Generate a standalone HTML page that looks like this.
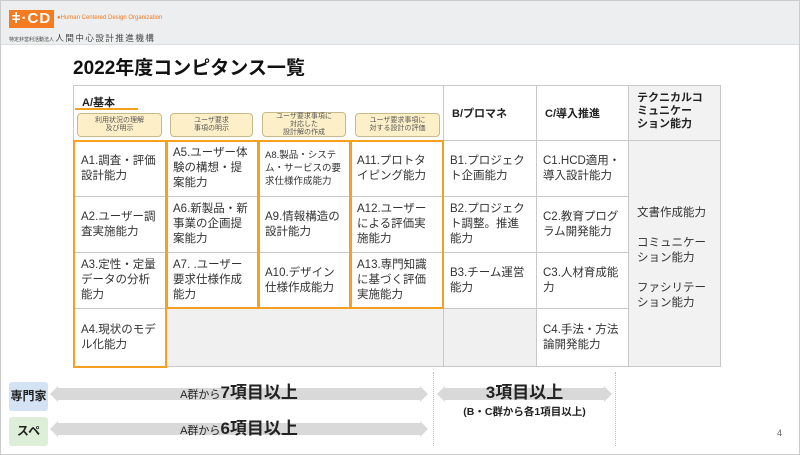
<!DOCTYPE html>
<html><head><meta charset="utf-8"><style>
*{margin:0;padding:0;box-sizing:border-box}
body{width:800px;height:455px;position:relative;overflow:hidden;background:#fff;font-family:"Liberation Sans","Noto Sans CJK JP",sans-serif;color:#222}
.a{position:absolute}
.c{position:absolute;font-size:11.5px;line-height:15px;padding:0 0 0 7px;display:flex;align-items:center;color:#333}
.o{position:absolute;border:2px solid #f5a020}
.t{position:absolute;background:#fdefc8;border:1px solid #c9b98a;border-radius:4px;font-size:7px;line-height:8px;text-align:center;color:#555;display:flex;align-items:center;justify-content:center}
.h{position:absolute;border-top:1px solid #c8c8c8}
.v{position:absolute;border-left:1px solid #c8c8c8}
.bar{position:absolute;height:12px;background:#d9d9d9;z-index:1}
.hl{position:absolute;z-index:1;width:0;height:0;border-top:8px solid transparent;border-bottom:8px solid transparent;border-right:8px solid #d9d9d9}
.hr{position:absolute;z-index:1;width:0;height:0;border-top:8px solid transparent;border-bottom:8px solid transparent;border-left:8px solid #d9d9d9}
.tx{position:absolute;z-index:2;background:transparent;text-align:center}
</style></head><body>
<div class="a" style="left:0;top:0;width:800px;height:45px;background:#eceeef;border-bottom:1px solid #ddd"></div>
<div class="a" style="left:0;top:0;width:800px;height:455px;border:1px solid #ccc"></div>
<div class="a" style="left:9px;top:10px;width:45px;height:18px;background:#f47b20;color:#fff;font-size:15px;font-weight:bold;line-height:18px;text-align:center;letter-spacing:1px">ǂ·CD</div>
<div class="a" style="left:57px;top:15px;font-size:6px;color:#f47b20">●Human Centered Design Organization</div>
<div class="a" style="left:9px;top:32px;font-size:5px;color:#444">特定非営利活動法人 <span style="font-size:8.5px;letter-spacing:1.5px">人間中心設計推進機構</span></div>
<div class="a" style="left:73px;top:53px;font-size:19px;font-weight:bold;color:#111">2022年度コンピタンス一覧</div>

<div class="a" style="left:73px;top:85px;width:648px;height:282px;border:1px solid #c8c8c8"></div>
<div class="a" style="left:166px;top:308px;width:277px;height:58px;background:#f0f0f0"></div>
<div class="a" style="left:443px;top:308px;width:93px;height:58px;background:#f0f0f0"></div>
<div class="a" style="left:628px;top:86px;width:92px;height:280px;background:#f2f2f2"></div>
<div class="v" style="left:443px;top:85px;height:282px"></div>
<div class="v" style="left:536px;top:85px;height:282px"></div>
<div class="v" style="left:628px;top:85px;height:282px"></div>
<div class="v" style="left:166px;top:140px;height:168px"></div>
<div class="v" style="left:258px;top:140px;height:168px"></div>
<div class="v" style="left:350px;top:140px;height:168px"></div>
<div class="h" style="left:73px;top:140px;width:648px"></div>
<div class="h" style="left:73px;top:196px;width:555px"></div>
<div class="h" style="left:73px;top:252px;width:555px"></div>
<div class="h" style="left:73px;top:308px;width:555px"></div>

<div class="a" style="left:82px;top:94px;font-size:11px;font-weight:bold">A/基本</div>
<div class="a" style="left:75px;top:108px;width:63px;height:2px;background:#f5a020"></div>
<div class="t" style="left:77px;top:113px;width:85px;height:24px">利用状況の理解<br>及び明示</div>
<div class="t" style="left:170px;top:113px;width:83px;height:24px">ユーザ要求<br>事項の明示</div>
<div class="t" style="left:262px;top:112px;width:84px;height:25px">ユーザ要求事項に<br>対応した<br>設計解の作成</div>
<div class="t" style="left:355px;top:113px;width:85px;height:24px">ユーザ要求事項に<br>対する設計の評価</div>
<div class="a" style="left:452px;top:105px;font-size:11px;font-weight:bold">B/プロマネ</div>
<div class="a" style="left:545px;top:105px;font-size:11px;font-weight:bold">C/導入推進</div>
<div class="a" style="left:637px;top:92px;font-size:11px;font-weight:bold;line-height:13px">テクニカルコ<br>ミュニケー<br>ション能力</div>

<div class="c" style="left:74px;top:141px;width:92px;height:55px">A1.調査・評価<br>設計能力</div>
<div class="c" style="left:74px;top:197px;width:92px;height:55px">A2.ユーザー調<br>査実施能力</div>
<div class="c" style="left:74px;top:253px;width:92px;height:55px">A3.定性・定量<br>データの分析<br>能力</div>
<div class="c" style="left:74px;top:309px;width:92px;height:57px">A4.現状のモデ<br>ル化能力</div>
<div class="c" style="left:166px;top:141px;width:92px;height:55px">A5.ユーザー体<br>験の構想・提<br>案能力</div>
<div class="c" style="left:166px;top:197px;width:92px;height:55px">A6.新製品・新<br>事業の企画提<br>案能力</div>
<div class="c" style="left:166px;top:253px;width:92px;height:55px">A7. .ユーザー<br>要求仕様作成<br>能力</div>
<div class="c" style="left:258px;top:141px;width:92px;height:55px;font-size:9.5px;line-height:13px">A8.製品・システ<br>ム・サービスの要<br>求仕様作成能力</div>
<div class="c" style="left:258px;top:197px;width:92px;height:55px">A9.情報構造の<br>設計能力</div>
<div class="c" style="left:258px;top:253px;width:92px;height:55px">A10.デザイン<br>仕様作成能力</div>
<div class="c" style="left:350px;top:141px;width:93px;height:55px">A11.プロトタ<br>イピング能力</div>
<div class="c" style="left:350px;top:197px;width:93px;height:55px">A12.ユーザー<br>による評価実<br>施能力</div>
<div class="c" style="left:350px;top:253px;width:93px;height:55px">A13.専門知識<br>に基づく評価<br>実施能力</div>
<div class="c" style="left:443px;top:141px;width:93px;height:55px">B1.プロジェク<br>ト企画能力</div>
<div class="c" style="left:443px;top:197px;width:93px;height:55px">B2.プロジェク<br>ト調整。推進<br>能力</div>
<div class="c" style="left:443px;top:253px;width:93px;height:55px">B3.チーム運営<br>能力</div>
<div class="c" style="left:536px;top:141px;width:92px;height:55px">C1.HCD適用・<br>導入設計能力</div>
<div class="c" style="left:536px;top:197px;width:92px;height:55px">C2.教育プログ<br>ラム開発能力</div>
<div class="c" style="left:536px;top:253px;width:92px;height:55px">C3.人材育成能<br>力</div>
<div class="c" style="left:536px;top:309px;width:92px;height:57px">C4.手法・方法<br>論開発能力</div>
<div class="a" style="left:637px;top:206px;font-size:11.5px;line-height:15px;color:#333">文書作成能力<br><br>コミュニケー<br>ション能力<br><br>ファシリテー<br>ション能力</div>

<div class="o" style="left:73px;top:140px;width:94px;height:228px"></div>
<div class="o" style="left:166px;top:140px;width:93px;height:169px"></div>
<div class="o" style="left:258px;top:140px;width:93px;height:169px"></div>
<div class="o" style="left:350px;top:140px;width:94px;height:169px"></div>

<div class="a" style="left:9px;top:382px;width:39px;height:29px;background:#d3e3f4;border-radius:3px;font-size:12px;font-weight:bold;text-align:center;line-height:29px">専門家</div>
<div class="a" style="left:9px;top:417px;width:39px;height:29px;background:#ddefd8;border-radius:3px;font-size:12px;font-weight:bold;text-align:center;line-height:29px">スペ</div>
<div class="a" style="left:433px;top:372px;height:74px;border-left:1px dotted #bbb"></div>
<div class="a" style="left:615px;top:372px;height:74px;border-left:1px dotted #bbb"></div>

<div class="hl" style="left:50px;top:386px"></div><div class="bar" style="left:58px;top:388px;width:362px"></div><div class="hr" style="left:420px;top:386px"></div>
<div class="hl" style="left:50px;top:421px"></div><div class="bar" style="left:58px;top:423px;width:362px"></div><div class="hr" style="left:420px;top:421px"></div>
<div class="hl" style="left:437px;top:386px"></div><div class="bar" style="left:445px;top:388px;width:159px"></div><div class="hr" style="left:604px;top:386px"></div>

<div class="tx" style="left:50px;top:383px;width:378px;font-size:11px;line-height:20px">A群から<b style="font-size:17px">7項目以上</b></div>
<div class="tx" style="left:50px;top:419px;width:378px;font-size:11px;line-height:20px">A群から<b style="font-size:17px">6項目以上</b></div>
<div class="tx" style="left:437px;top:383px;width:175px;font-size:17px;font-weight:bold;line-height:20px">3項目以上</div>
<div class="tx" style="left:437px;top:404px;width:175px;font-size:10.5px;font-weight:bold">(B・C群から各1項目以上)</div>
<div class="a" style="left:777px;top:428px;font-size:9px;color:#666">4</div>
</body></html>
